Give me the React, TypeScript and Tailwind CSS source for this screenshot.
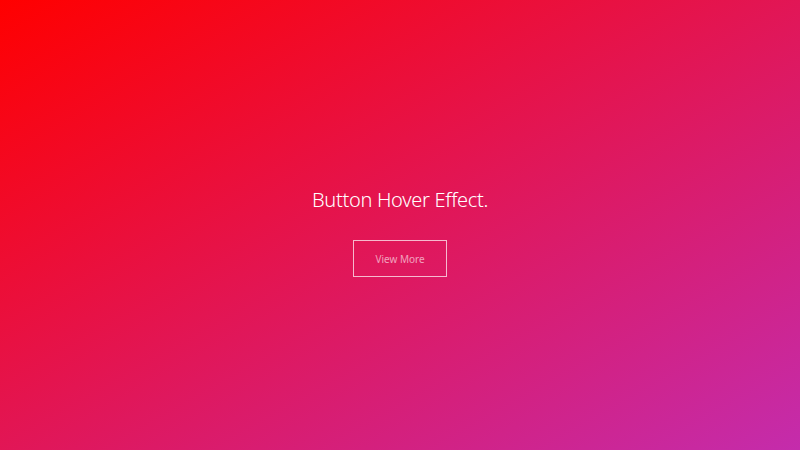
export default function App() {
  return (
    <div
      className="w-[800px] h-[450px] flex flex-col items-center bg-[linear-gradient(to_bottom_right,#ff0000,#c42cac)]"
      style={{ fontFamily: '"Noto Sans", "Open Sans", sans-serif' }}
    >
      <h1 className="mt-[185px] text-[20px] leading-[30px] text-white font-light tracking-[-0.3px]">
        Button Hover Effect.
      </h1>
      <button className="mt-[25px] w-[94px] h-[37px] pt-[2px] border border-white/70 text-[10px] text-white/60">
        View More
      </button>
    </div>
  );
}
